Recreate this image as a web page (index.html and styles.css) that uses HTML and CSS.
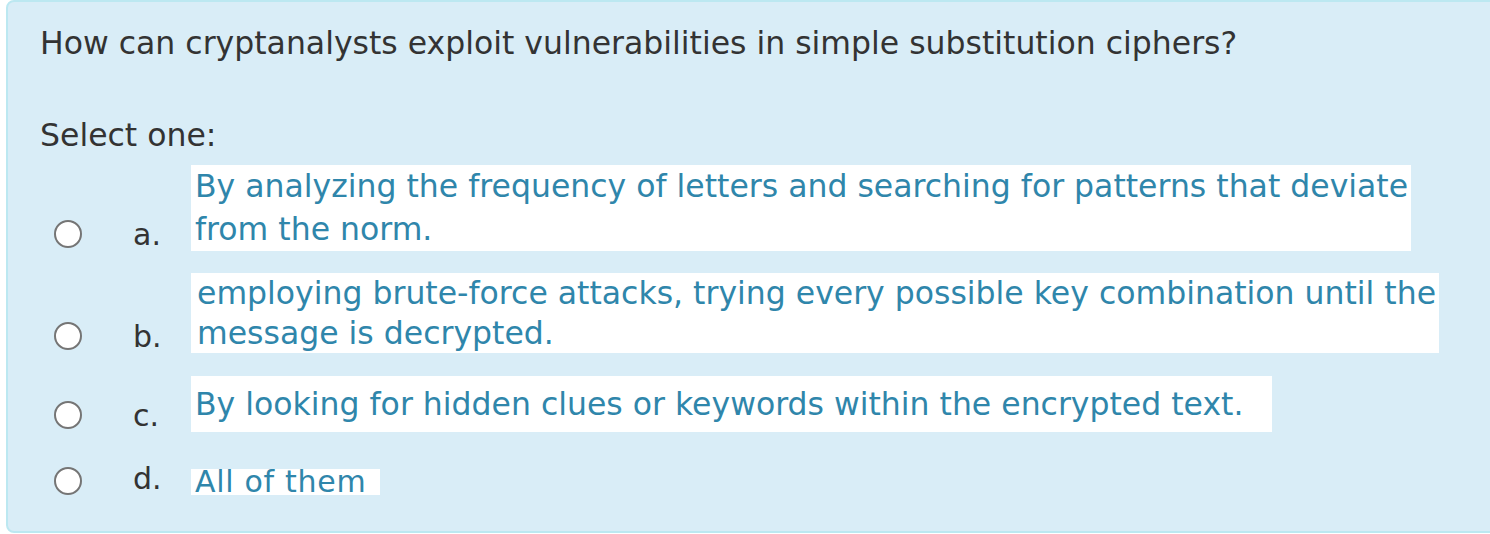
FILE: index.html
```html
<!DOCTYPE html>
<html>
<head>
<meta charset="utf-8">
<link rel="stylesheet" href="styles.css">
</head>
<body>
<div class="que">
  <div class="qtext">How can cryptanalysts exploit vulnerabilities in simple substitution ciphers?</div>
  <div class="prompt">Select one:</div>
  <div class="answers">
    <div class="row">
      <span class="radio"></span>
      <span class="num">a.</span>
      <div class="ans ans-a">By analyzing the frequency of letters and searching for patterns that deviate<br>from the norm.</div>
    </div>
    <div class="row">
      <span class="radio"></span>
      <span class="num">b.</span>
      <div class="ans ans-b">employing brute-force attacks, trying every possible key combination until the<br>message is decrypted.</div>
    </div>
    <div class="row row-c">
      <span class="radio"></span>
      <span class="num">c.</span>
      <div class="ans ans-c">By looking for hidden clues or keywords within the encrypted text.</div>
    </div>
    <div class="row row-d">
      <span class="radio"></span>
      <span class="num">d.</span>
      <div class="ans ans-d">All of them</div>
    </div>
  </div>
</div>
</body>
</html>
```
FILE: styles.css
```css
html, body {
  margin: 0;
  padding: 0;
  background: #ffffff;
  overflow: hidden;
}
.que {
  margin-left: 6px;
  width: 1520px;
  height: 533px;
  box-sizing: border-box;
  background: #d9edf7;
  border: 2px solid #bce8f1;
  border-radius: 8px;
  padding: 21px 0 0 32px;
  font-family: "DejaVu Sans", Verdana, sans-serif;
  color: #333333;
}
.qtext {
  font-size: 31.5px;
  line-height: 40px;
}
.prompt {
  font-size: 31.5px;
  line-height: 40px;
  margin-top: 52px;
}
.answers {
  display: flex;
  flex-direction: column;
  gap: 22px;
  margin-top: 10px;
}
.row {
  display: flex;
  align-items: flex-end;
}
.radio {
  width: 24px;
  height: 24px;
  border: 2px solid #757575;
  border-radius: 50%;
  background: #ffffff;
  margin-left: 14px;
  margin-bottom: 3px;
  flex: none;
}
.num {
  font-size: 30px;
  line-height: 43px;
  margin-left: 51px;
  width: 58px;
  margin-bottom: -5px;
  flex: none;
}
.ans {
  background: #ffffff;
  color: #2f86ab;
  font-size: 31.5px;
  line-height: 43px;
  padding: 0 3px 0 4px;
  white-space: nowrap;
}
.ans-b {
  line-height: 40px;
  padding-left: 6px;
}
.row-c {
  margin-top: 1px;
}
.ans-c {
  padding: 7px 29px 6px 4px;
}
.row-d {
  margin-top: 3px;
}
.row-d .radio {
  margin-bottom: 0;
}
.ans-d {
  font-size: 30px;
  letter-spacing: 0.7px;
  line-height: 26px;
  padding: 0 14px 0 4px;
}
```
